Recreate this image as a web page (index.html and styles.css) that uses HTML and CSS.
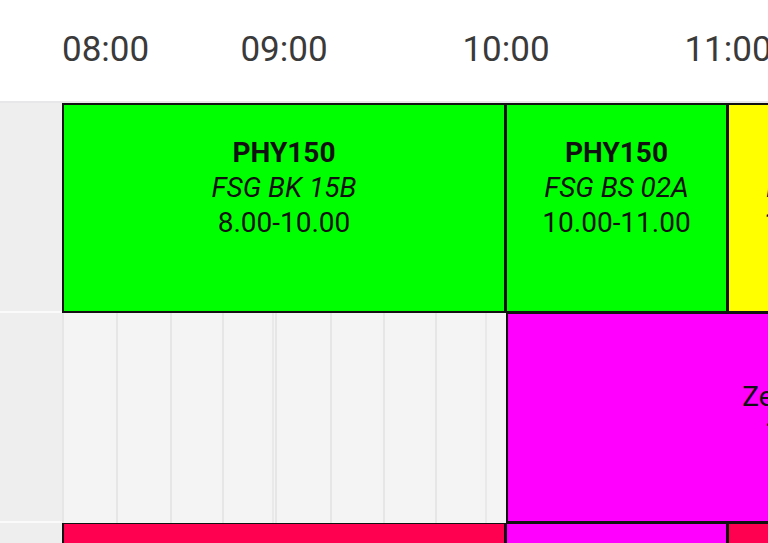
FILE: index.html
```html
<!DOCTYPE html>
<html>
<head>
<meta charset="utf-8">
<link rel="stylesheet" href="styles.css">
</head>
<body>
<div class="page">
  <div class="header">
    <div class="hours">
      <div class="hour first"><span class="label">08:00</span></div>
      <div class="hour"><span class="label">09:00</span></div>
      <div class="hour"><span class="label">10:00</span></div>
      <div class="hour"><span class="label">11:00</span></div>
    </div>
  </div>
  <div class="body">
    <div class="days">
      <div class="day"></div>
      <div class="day"></div>
      <div class="day"></div>
    </div>
    <div class="rows">
      <div class="row">
        <div class="block green w2">
          <div class="code">PHY150</div>
          <div class="room">FSG BK 15B</div>
          <div class="time">8.00-10.00</div>
        </div>
        <div class="block green w1 next">
          <div class="code">PHY150</div>
          <div class="room">FSG BS 02A</div>
          <div class="time">10.00-11.00</div>
        </div>
        <div class="block yellow w1 next">
          <div class="code">MAT183</div>
          <div class="room">FSG BK 12B</div>
          <div class="time">11.00-12.00</div>
        </div>
      </div>
      <div class="row lower">
        <div class="empty w2">
          <div class="tick t1"></div>
          <div class="tick t2"></div>
          <div class="tick t3"></div>
          <div class="tick t4"></div>
          <div class="tick t5"></div>
          <div class="tick t6"></div>
          <div class="tick t7"></div>
          <div class="tick t8"></div>
          <div class="tick t9"></div>
          <div class="tick t10"></div>
          <div class="tick t11"></div>
        </div>
        <div class="block magenta w3">
          <div class="code">CHM138</div>
          <div class="plain">Zeti Aini Zainun</div>
          <div class="time">10.00-13.00</div>
        </div>
      </div>
      <div class="row lower">
        <div class="block red w2">
          <div class="code">CSC128</div>
          <div class="room">FSG BK 11A</div>
          <div class="time">8.00-10.00</div>
        </div>
        <div class="block magenta w1 next">
          <div class="code">CHM138</div>
          <div class="room">FSG MK 01</div>
          <div class="time">10.00-11.00</div>
        </div>
        <div class="block red w1 next">
          <div class="code">CSC128</div>
          <div class="room">FSG BK 11A</div>
          <div class="time">11.00-12.00</div>
        </div>
      </div>
    </div>
  </div>
</div>
</body>
</html>
```

FILE: styles.css
```css
html, body {
  margin: 0;
  padding: 0;
  background: #ffffff;
  overflow: hidden;
}

.page {
  width: 768px;
  height: 543px;
  overflow: hidden;
  font-family: Roboto, "Liberation Sans", sans-serif;
}

.header {
  height: 101px;
  border-bottom: 2px solid #e7e7e9;
  background: #ffffff;
  box-sizing: content-box;
}

.hours {
  display: flex;
  padding-left: 62px;
  padding-top: 29px;
}

.hour {
  flex: 0 0 222px;
  width: 222px;
  position: relative;
  height: 41px;
}

.label {
  position: absolute;
  left: 0;
  top: 0;
  transform: translateX(-50%);
  font-size: 35px;
  line-height: 41px;
  color: #3a3a3a;
  white-space: nowrap;
}

.hour.first .label {
  transform: none;
}

.body {
  display: flex;
}

.days {
  flex: 0 0 62px;
  width: 62px;
  background: #eeeeee;
  display: flex;
  flex-direction: column;
}

.day {
  height: 208px;
  border-bottom: 2px solid #fafafa;
}

.rows {
  display: flex;
  flex-direction: column;
  flex: 0 0 auto;
}

.row {
  display: flex;
  height: 210px;
}

.block {
  box-sizing: border-box;
  height: 210px;
  border: 2px solid #111111;
  display: flex;
  flex-direction: column;
  align-items: center;
  padding-top: 30px;
  flex: 0 0 auto;
  color: #111111;
  font-size: 28px;
  line-height: 35px;
  white-space: nowrap;
}

.block.next {
  border-left-width: 1px;
}

.row.lower .block {
  border-top-width: 1px;
}

.w1 { width: 222px; }
.w2 { width: 444px; }
.w3 { width: 666px; }

.green { background: #00ff00; }
.yellow { background: #ffff00; }
.magenta { background: #ff00ff; }
.red { background: #ff0050; }

.code {
  font-weight: 700;
}

.room {
  font-style: italic;
}

.empty {
  flex: 0 0 444px;
  height: 210px;
  background: #f4f4f4;
  display: flex;
  box-sizing: border-box;
}

.tick {
  height: 100%;
  border-left: 2px solid #e6e6e6;
  box-sizing: border-box;
}

.t1 { width: 54px; }
.t2 { width: 54px; }
.t3 { width: 52px; }
.t4 { width: 50px; }
.t5 { width: 3px; border-left-color: #e9e9e9; }
.t6 { width: 55px; }
.t7 { width: 53px; }
.t8 { width: 52px; }
.t9 { width: 50px; }
.t10 { width: 5px; border-left-color: #e9e9e9; }
.t11 { width: 16px; border-left: none; }
```
